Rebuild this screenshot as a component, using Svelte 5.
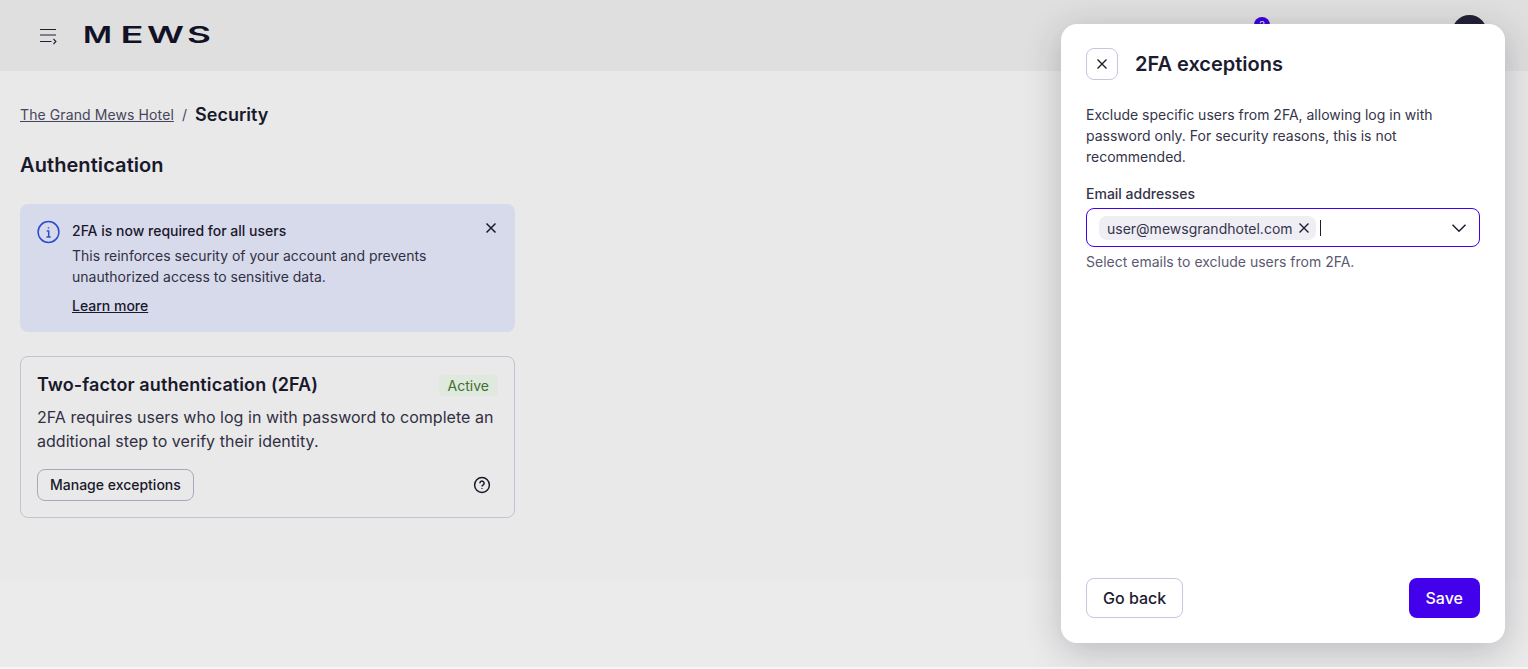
<script>
  const x = 'M6 6l12 12M18 6L6 18';
  const logoLetters = [
    { ch: 'M', at: 0, w: 29 },
    { ch: 'E', at: 37.5, w: 23 },
    { ch: 'W', at: 64, w: 37 },
    { ch: 'S', at: 104, w: 24 }
  ];
</script>

<div class="shell">
  <header class="topbar">
    <svg class="menu" width="20" height="20" viewBox="0 0 20 20" fill="none" stroke="#24233a" stroke-width="1.1">
      <path d="M2 3.5h16M2 9h16M2 15.5h11.5M15.5 13l2.4 2.5-2.4 2.5" />
    </svg>
    <svg class="logo" width="130" height="30" viewBox="0 0 130 30" role="img" aria-label="MEWS">
      {#each logoLetters as l}
        <text x={l.at} y="23" textLength={l.w} lengthAdjust="spacingAndGlyphs">{l.ch}</text>
      {/each}
    </svg>
    <div class="actions">
      <span class="badge">2</span>
      <span class="avatar"></span>
    </div>
  </header>

  <main class="content">
    <nav class="crumbs">
      <a href="#top">The Grand Mews Hotel</a>
      <span class="sep">/</span>
      <strong>Security</strong>
    </nav>
    <h1>Authentication</h1>

    <section class="alert">
      <svg class="info" width="24" height="24" viewBox="0 0 24 24" fill="none" stroke="#2f55e0" stroke-width="1.5">
        <circle cx="11.5" cy="12" r="10.4" />
        <path d="M11.5 7.2v1.2M9.7 11h2v6M9.5 17h4.2" />
      </svg>
      <div class="alert-body">
        <h2>2FA is now required for all users</h2>
        <p>This reinforces security of your account and prevents unauthorized access to sensitive data.</p>
        <a href="#top">Learn more</a>
      </div>
      <svg class="alert-x" width="18" height="18" viewBox="0 0 24 24" fill="none" stroke="#1c1b30" stroke-width="2"><path d={x} /></svg>
    </section>

    <section class="card">
      <div class="card-head">
        <h2>Two-factor authentication (2FA)</h2>
        <span class="status">Active</span>
      </div>
      <p>2FA requires users who log in with password to complete an additional step to verify their identity.</p>
      <div class="card-foot">
        <button class="manage">Manage exceptions</button>
        <svg class="help" width="20" height="20" viewBox="0 0 20 20" fill="none" stroke="#1c1b30" stroke-width="1.5">
          <circle cx="10" cy="10" r="7.4" />
          <path d="M7.9 8.2a2.1 2.1 0 1 1 3.3 1.7c-.8.5-1.2.9-1.2 1.6M10 13.2v.9" />
        </svg>
      </div>
    </section>
  </main>
  <div class="scrim"></div>

  <aside class="modal">
    <div class="modal-head">
      <button class="close" aria-label="Close">
        <svg width="18" height="18" viewBox="0 0 24 24" fill="none" stroke="#1c1b30" stroke-width="1.8"><path d={x} /></svg>
      </button>
      <h2>2FA exceptions</h2>
    </div>
    <p class="desc">Exclude specific users from 2FA, allowing log in with password only. For security reasons, this is not recommended.</p>
    <div class="label">Email addresses</div>
    <div class="select">
      <span class="chip"><span class="chip-text">user@mewsgrandhotel.com</span>
        <svg width="18" height="18" viewBox="0 0 24 24" fill="none" stroke="#1c1b30" stroke-width="1.8"><path d={x} /></svg>
      </span>
      <span class="caret"></span>
      <svg class="chev" width="18" height="18" viewBox="0 0 18 18" fill="none" stroke="#1c1b30" stroke-width="1.5"><path d="M2.5 5.8L9 12.2l6.5-6.4" /></svg>
    </div>
    <div class="hint">Select emails to exclude users from 2FA.</div>
    <div class="modal-foot">
      <button class="back">Go back</button>
      <button class="save">Save</button>
    </div>
  </aside>
</div>

<style>
  :global(body) {
    margin: 0;
    background: #f6f6f6;
    font-family: Inter, "Liberation Sans", sans-serif;
    color: #1c1b30;
    overflow: hidden;
  }
  * { box-sizing: border-box; }
  h1, h2, p { margin: 0; }
  button { font-family: inherit; color: inherit; background: transparent; cursor: pointer; }

  .shell { position: relative; height: 667px; display: flex; flex-direction: column; background: #ffffff; overflow: hidden; }
  .scrim { position: absolute; inset: 0; background: rgba(0, 0, 0, 0.08); }

  .topbar { height: 71px; flex: none; display: flex; align-items: center; padding: 0 41px 0 38px; background: #f2f2f2; }
  .logo { margin-left: 25px; margin-bottom: 1px; }
  .logo text { font-family: Inter, sans-serif; font-weight: 600; font-size: 23px; fill: #14132a; }
  .actions { margin-left: auto; display: flex; align-items: flex-start; align-self: stretch; }
  .badge { width: 16px; height: 16px; margin-top: 17px; margin-right: 182px; border-radius: 50%; background: #4200eb; color: #fff; font-size: 10px; line-height: 16px; text-align: center; }
  .avatar { width: 35px; height: 36px; margin-top: 15px; border-radius: 50%; background: #24233a; }

  .content { padding: 31px 20px 0; height: 509px; flex: none; background: #fdfdfd; }
  .crumbs { display: flex; align-items: center; height: 24px; font-size: 14px; letter-spacing: 0.1px; }
  .crumbs a { color: #4e4b66; }
  .sep { margin: 0 8px; color: #4e4b66; }
  .crumbs strong { font-size: 18px; font-weight: 600; color: #1c1b30; letter-spacing: 0; }
  h1 { margin-top: 25px; font-size: 20px; line-height: 28px; font-weight: 600; letter-spacing: 0.08px; }

  .alert { position: relative; width: 495px; height: 128px; margin-top: 25px; padding: 17px 17px; display: flex; gap: 11px; background: #eaedff; border-radius: 8px; }
  .info { flex: none; margin-top: -1px; }
  .alert-body h2 { font-size: 14px; line-height: 20px; font-weight: 450; }
  .alert-body p { width: 380px; margin-top: 4px; font-size: 14px; line-height: 21px; color: #35344a; }
  .alert-body a { display: block; margin-top: 9px; font-size: 14px; line-height: 20px; font-weight: 450; color: #1c1b30; }
  .alert-x { position: absolute; top: 15px; right: 15px; }

  .card { width: 495px; height: 162px; margin-top: 24px; padding: 15px 16px 16px; border: 1px solid #d5d3e4; border-radius: 8px; }
  .card-head { display: flex; justify-content: space-between; align-items: center; height: 24px; }
  .card-head h2 { font-size: 18px; font-weight: 600; letter-spacing: 0.1px; }
  .status { padding: 0 9px; height: 21px; margin-top: 2px; border-radius: 4px; background: #f2fdf0; color: #467a38; font-size: 14px; line-height: 21px; }
  .card p { margin-top: 9px; font-size: 16px; line-height: 24px; color: #35344a; letter-spacing: 0.03px; }
  .card-foot { display: flex; justify-content: space-between; align-items: center; margin-top: 16px; padding-right: 6px; }
  .manage { height: 32px; padding: 0 12px 1px; border: 1px solid #b8b5cf; border-radius: 8px; font-size: 14px; font-weight: 450; }

  .modal { position: absolute; left: 1061px; top: 24px; width: 444px; height: 619px; padding: 24px 25px; display: flex; flex-direction: column; background: #fff; border-radius: 16px; box-shadow: 0 8px 36px rgba(30, 30, 50, 0.24); }
  .modal-head { display: flex; align-items: center; gap: 17px; }
  .close { width: 32px; height: 32px; padding: 0; display: grid; place-items: center; border: 1px solid #c9c5e0; border-radius: 8px; }
  .modal-head h2 { font-size: 20px; font-weight: 600; }
  .desc { margin-top: 24px; font-size: 14px; line-height: 21px; color: #35344a; }
  .label { margin-top: 17px; font-size: 14px; line-height: 20px; font-weight: 450; color: #35344a; }
  .select { height: 39px; margin-top: 4px; padding: 0 11px 0 12px; display: flex; align-items: center; border: 1px solid #4200eb; border-radius: 8px; }
  .chip { height: 24px; padding: 0 3px 0 8px; display: flex; align-items: center; gap: 2px; border-radius: 8px; background: #eeeef4; font-size: 14px; color: #35344a; }
  .chip-text { padding-top: 1px; }
  .caret { width: 1px; height: 16px; margin-left: 4px; background: #1c1b30; }
  .chev { margin-left: auto; }
  .hint { margin-top: 5px; font-size: 14px; line-height: 20px; color: #5c5a70; }
  .modal-foot { margin-top: auto; margin-bottom: 1px; display: flex; justify-content: space-between; }
  .back, .save { height: 40px; border-radius: 8px; font-size: 16px; font-weight: 450; }
  .back { padding: 0 16px; border: 1px solid #c9c5e0; }
  .save { padding: 0 17px; border: 0; background: #4200eb; color: #fff; }
</style>
